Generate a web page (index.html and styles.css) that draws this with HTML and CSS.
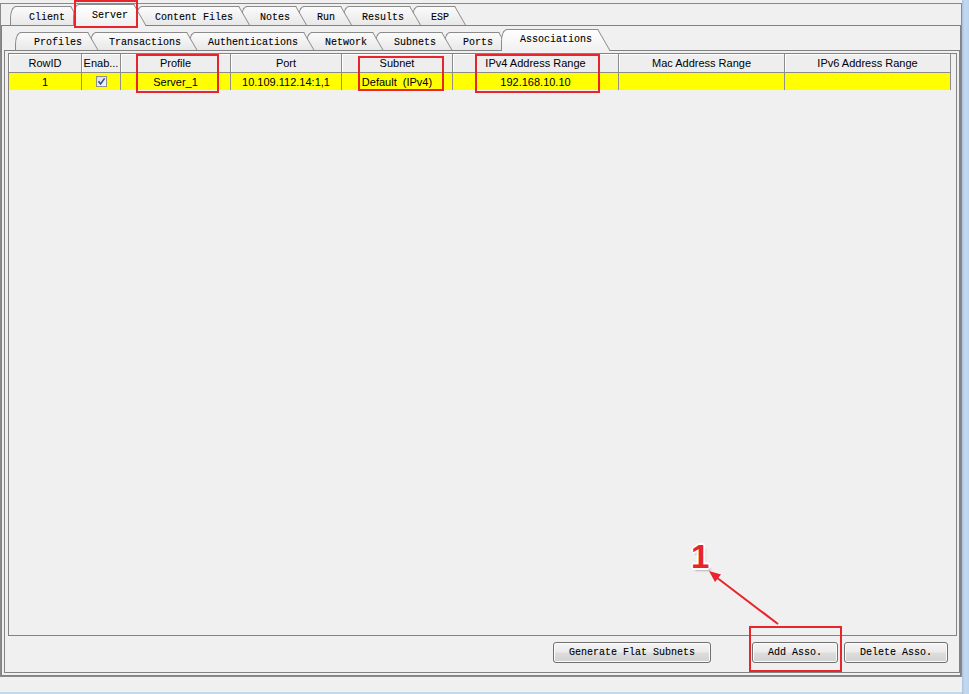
FILE: index.html
```html
<!DOCTYPE html>
<html lang="en">
<head>
    <meta charset="UTF-8">
    <title>Server - Associations</title>
    <link rel="stylesheet" href="styles.css">
</head>
<body>
<div class="screen">
    <div class="main">
        <div class="frame">
            <div class="tabs tabs-outer">
                <div class="tab">Client</div>
                <div class="tab selected">Server</div>
                <div class="tab">Content Files</div>
                <div class="tab">Notes</div>
                <div class="tab">Run</div>
                <div class="tab">Results</div>
                <div class="tab">ESP</div>
            </div>
            <div class="panel panel-outer">
                <div class="tabs tabs-inner">
                    <div class="tab">Profiles</div>
                    <div class="tab">Transactions</div>
                    <div class="tab">Authentications</div>
                    <div class="tab">Network</div>
                    <div class="tab">Subnets</div>
                    <div class="tab">Ports</div>
                    <div class="tab selected">Associations</div>
                </div>
                <div class="panel panel-inner">
                    <div class="table-pane">
                        <div class="grid grid-header">
                            <div class="th">RowID</div>
                            <div class="th">Enab...</div>
                            <div class="th">Profile</div>
                            <div class="th">Port</div>
                            <div class="th">Subnet</div>
                            <div class="th">IPv4 Address Range</div>
                            <div class="th">Mac Address Range</div>
                            <div class="th">IPv6 Address Range</div>
                        </div>
                        <div class="grid grid-row">
                            <div class="td">1</div>
                            <div class="td">
                                <svg class="checkbox" width="11" height="11" viewBox="0 0 11 11">
                                    <defs>
                                        <linearGradient id="cbFill" x1="0" y1="0" x2="1" y2="1">
                                            <stop offset="0" stop-color="#d6d9de"/>
                                            <stop offset="1" stop-color="#fbfbfb"/>
                                        </linearGradient>
                                    </defs>
                                    <rect x="0.5" y="0.5" width="10" height="10" fill="url(#cbFill)" stroke="#8f8f8f"/>
                                    <path d="M2.5 5.2 L4.6 8 L8.6 2.4" fill="none" stroke="#2c4f9e" stroke-width="1.6"/>
                                </svg>
                            </div>
                            <div class="td">Server_1</div>
                            <div class="td">10.109.112.14:1,1</div>
                            <div class="td">Default&nbsp;&nbsp;(IPv4)</div>
                            <div class="td">192.168.10.10</div>
                            <div class="td"></div>
                            <div class="td"></div>
                        </div>
                    </div>
                    <div class="button-row">
                        <button class="btn btn-generate">Generate Flat Subnets</button>
                        <button class="btn">Add Asso.</button>
                        <button class="btn">Delete Asso.</button>
                    </div>
                </div>
            </div>
        </div>
        <div class="status"></div>
    </div>
    <div class="side-strip"></div>

    <!-- red call-outs drawn over the screenshot -->
    <div class="mark mark-server"></div>
    <div class="mark mark-profile"></div>
    <div class="mark mark-subnet"></div>
    <div class="mark mark-ipv4"></div>
    <div class="mark mark-add"></div>
    <svg class="arrow" width="90" height="70" viewBox="0 0 90 70">
        <line x1="78" y1="62" x2="16" y2="15" stroke="#e8242c" stroke-width="2"/>
        <polygon points="9,9 21,12.5 15,20" fill="#e8242c"/>
    </svg>
    <div class="step">1</div>
</div>
</body>
</html>
```

FILE: styles.css
```css
body {
    margin: 0;
    background: #f0f0f0;
}
.screen {
    position: relative;
    display: flex;
    width: 969px;
    height: 694px;
    overflow: hidden;
    background: #f0f0f0;
}
.main {
    width: 962px;
}
.side-strip {
    width: 7px;
    background: linear-gradient(90deg, #a9c4e0, #c3d9ef 40%, #bcd3ec);
}
.status {
    height: 15px;
    border-bottom: 2px solid #c4d8ec;
}

.frame {
    box-sizing: border-box;
    display: flex;
    flex-direction: column;
    margin-top: 3px;
    width: 962px;
    height: 674px;
    border: 1px solid #8a8a8a;
}

/* tab strips */
.tabs {
    display: flex;
    align-items: flex-start;
}
.tabs-outer {
    height: 21px;
    padding-left: 9px;
}
.tabs-inner {
    height: 24px;
    padding-left: 11px;
}
.tab {
    position: relative;
    box-sizing: border-box;
    padding: 0 5px 0 18px;
    margin-right: 3px;
    border-top: 1px solid #8b8b8b;
    border-left: 1px solid #8b8b8b;
    border-top-left-radius: 6px 12px;
    background: linear-gradient(#fbfbfb, #e8e8e8);
    font: 10px "Liberation Mono", monospace;
    color: #000;
    white-space: nowrap;
    -webkit-text-stroke: 0.1px #000;
}
.tab::after {
    content: "";
    position: absolute;
    z-index: -1;
    top: -1px;
    bottom: 0;
    left: calc(100% - 14px);
    width: 14px;
    border-top: 1px solid #8b8b8b;
    border-right: 1px solid #8b8b8b;
    background: inherit;
    transform: skewX(30deg);
    transform-origin: 0 0;
}
.tab:nth-child(1) { z-index: 9; }
.tab:nth-child(2) { z-index: 8; }
.tab:nth-child(3) { z-index: 7; }
.tab:nth-child(4) { z-index: 6; }
.tab:nth-child(5) { z-index: 5; }
.tab:nth-child(6) { z-index: 4; }
.tab:nth-child(7) { z-index: 3; }
.tabs-outer .tab {
    margin-top: 2px;
    height: 19px;
    line-height: 21px;
}
.tabs-inner .tab {
    margin-top: 6px;
    height: 18px;
    line-height: 19px;
}
.tab.selected {
    z-index: 20;
    background: linear-gradient(#ffffff, #f0f0f0);
}
.tabs-outer .tab.selected {
    margin-top: 0;
    height: 22px;
    line-height: 22px;
}
.tabs-inner .tab.selected {
    margin-top: 3px;
    height: 22px;
    line-height: 20px;
}

/* panels */
.panel {
    box-sizing: border-box;
    display: flex;
    flex-direction: column;
    border: 1px solid #828282;
}
.panel-outer {
    flex: 1;
    padding: 0 0 2px 2px;
}
.panel-inner {
    flex: 1;
    padding: 2px 2px 9px 3px;
}

/* table */
.table-pane {
    flex: 1;
    border: 1px solid #828282;
}
.grid {
    display: grid;
    grid-template-columns: 73px 39px 110px 111px 111px 166px 166px 166px;
    font: 11px "Liberation Sans", Arial, sans-serif;
    color: #000;
}
.th {
    box-sizing: border-box;
    height: 19px;
    line-height: 18px;
    text-align: center;
    background: #eeeeee;
    border-right: 1px solid #8c8c8c;
    border-bottom: 1px solid #8c8c8c;
    box-shadow: inset 1px 1px 0 #ffffff;
    white-space: nowrap;
    overflow: hidden;
}
.td {
    display: flex;
    align-items: center;
    justify-content: center;
    box-sizing: border-box;
    height: 17px;
    background: #ffff00;
    border-right: 1px solid #8f8f8f;
    white-space: nowrap;
}
.checkbox {
    display: block;
}

/* buttons */
.button-row {
    display: flex;
    justify-content: flex-end;
    gap: 6px;
    margin-top: 6px;
    padding-right: 9px;
}
.btn {
    box-sizing: border-box;
    height: 21px;
    padding: 0 15px;
    border: 1px solid #707070;
    border-radius: 3px;
    background: linear-gradient(#f4f4f4, #ebebeb 48%, #dddddd 52%, #d2d2d2);
    box-shadow: inset 0 0 0 1px #fbfbfb;
    font: 10px "Liberation Mono", monospace;
    color: #000;
    -webkit-text-stroke: 0.1px #000;
}
.btn-generate {
    margin-right: 35px;
}

/* call-outs */
.mark {
    position: absolute;
    z-index: 50;
    box-sizing: border-box;
    border: 2px solid #e8242c;
}
.mark-server { left: 74px; top: 0; width: 64px; height: 28px; }
.mark-profile { left: 136px; top: 54px; width: 83px; height: 39px; }
.mark-subnet { left: 358px; top: 56px; width: 86px; height: 35px; }
.mark-ipv4 { left: 475px; top: 54px; width: 125px; height: 39px; }
.mark-add { left: 749px; top: 626px; width: 93px; height: 46px; }
.arrow {
    position: absolute;
    z-index: 50;
    left: 700px;
    top: 562px;
}
.step {
    position: absolute;
    z-index: 50;
    left: 691px;
    top: 540px;
    font: bold 33px/34px "Liberation Sans", Arial, sans-serif;
    color: #e8242c;
    text-shadow:
        -1px -1px 0 #fff, 1px -1px 0 #fff, -1px 1px 0 #fff, 1px 1px 0 #fff,
        0 -2px 0 #fff, 0 2px 0 #fff, -2px 0 0 #fff, 2px 0 0 #fff,
        2px 3px 2px rgba(0, 0, 0, 0.25);
}
```
